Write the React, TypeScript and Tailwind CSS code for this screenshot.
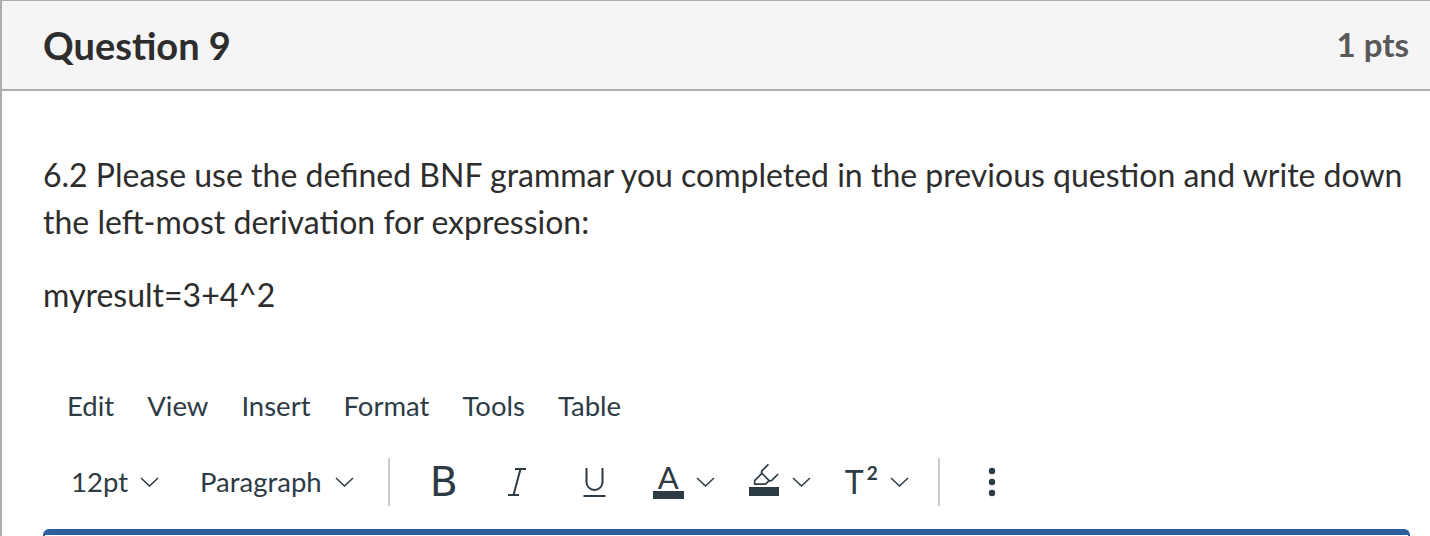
import React from 'react'
import { Highlighter } from 'lucide-react'

const menuItems = ['Edit', 'View', 'Insert', 'Format', 'Tools', 'Table']

const Chevron = ({ className = '' }: { className?: string }) => (
  <svg className={className} width="19" height="10" viewBox="0 0 19 10" fill="none" stroke="#2d3b45" strokeWidth="1.5">
    <path d="M1 1l8.5 8 8.5-8" />
  </svg>
)

const Separator = ({ className = '' }: { className?: string }) => (
  <div className={`w-[2px] h-[48px] bg-[#c7cdd1] ${className}`} />
)

export default function App() {
  return (
    <div className="w-[1430px] h-[536px] overflow-hidden bg-white font-['Lato',sans-serif]">
      <div className="h-full border-l-2 border-t border-[#adadad]">
        {/* Question header */}
        <header className="h-[90px] bg-[#f5f5f5] border-b-2 border-[#adadad] flex items-center justify-between pl-[41px] pr-[21px]">
          <h2 className="text-[38px] font-bold text-[#2d2d2d]">Question 9</h2>
          <span className="text-[33px] font-bold text-[#595959]">1 pts</span>
        </header>

        {/* Question text */}
        <div className="pl-[41px] pr-[20px] pt-[60px] text-[#2d2d2d]">
          <p className="text-[32px] leading-[47px]">
            6.2 Please use the defined BNF grammar you completed in the previous question and write down the left-most derivation for expression:
          </p>
          <p className="text-[32px] leading-[47px] mt-[26px]">myresult=3+4^2</p>

          {/* Editor */}
          <div className="mt-[63px]">
            <div className="flex items-center gap-[33px] pl-[24px] h-[50px] text-[27.5px] text-[#2d3b45]">
              {menuItems.map((item) => (
                <span key={item}>{item}</span>
              ))}
            </div>

            <div className="flex items-center h-[50px] mt-[26px] pl-[28px] text-[#2d3b45]">
              <span className="text-[27.5px]">12pt</span>
              <Chevron className="ml-[12px]" />
              <span className="text-[27.5px] ml-[41px]">Paragraph</span>
              <Chevron className="ml-[13px]" />
              <Separator className="ml-[34px]" />

              <span className="ml-[40px] text-[41px] font-['DejaVu_Sans',sans-serif] leading-none">B</span>

              <svg className="ml-[50px]" width="18" height="28" viewBox="0 0 18 28" fill="none" stroke="#2d3b45" strokeWidth="2">
                <path d="M7 1h11M0 27h11M12.5 1 5.5 27" />
              </svg>

              <svg className="ml-[56px]" width="25" height="30" viewBox="0 0 25 30" fill="none" stroke="#2d3b45" strokeWidth="2">
                <path d="M4.5 1v14a8 8 0 0 0 16 0V1M1.5 29h22" />
              </svg>

              <div className="ml-[46px] flex flex-col items-center w-[31px]">
                <span className="text-[31px] leading-[24px]">A</span>
                <div className="w-[31px] h-[8px] bg-[#2d3b45] mt-[2px]" />
              </div>
              <Chevron className="ml-[12px]" />

              <div className="ml-[34px] flex flex-col items-center w-[30px]">
                <Highlighter className="w-[29px] h-[29px] -mt-[9px] -mb-[2px] ml-[3px]" strokeWidth={1.4} />
                <div className="w-[30px] h-[9px] bg-[#2d3b45]" />
              </div>
              <Chevron className="ml-[13px]" />

              <span className="ml-[34px] flex items-start leading-none">
                <span className="text-[32px] leading-none">T</span>
                <span className="text-[19px] leading-none font-bold ml-[3px] -mt-[3px]">2</span>
              </span>
              <Chevron className="ml-[12px]" />

              <Separator className="ml-[29px]" />
              <svg className="ml-[48px]" width="8" height="30" viewBox="0 0 8 30" fill="#2d3b45">
                <circle cx="4" cy="4" r="3.2" />
                <circle cx="4" cy="15" r="3.2" />
                <circle cx="4" cy="26" r="3.2" />
              </svg>
            </div>

            <div className="mt-[22px] h-[40px] border-t-[6px] border-x-2 border-[#2b5f9e] rounded-t-[6px]" />
          </div>
        </div>
      </div>
    </div>
  )
}
